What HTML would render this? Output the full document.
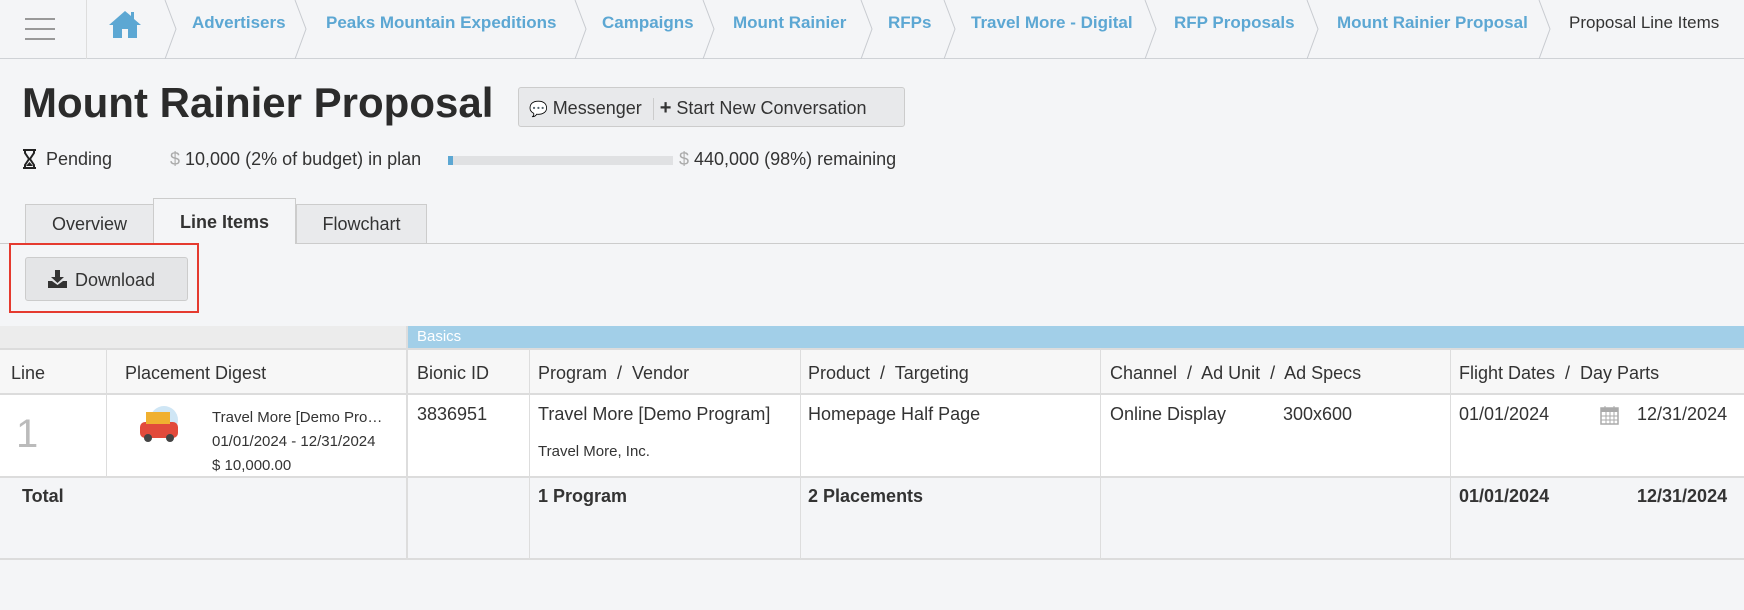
<!DOCTYPE html>
<html><head><meta charset="utf-8"><style>
*{box-sizing:border-box;margin:0;padding:0}
body{width:1744px;height:610px;background:#f4f5f7;font-family:"Liberation Sans",sans-serif;color:#333;position:relative;overflow:hidden}
.a{position:absolute;white-space:nowrap}
.nav{position:absolute;left:0;top:0;width:1744px;height:59px;border-bottom:1px solid #cfd2d6;background:#f4f5f7}
.bc{position:absolute;top:13px;font-size:17px;font-weight:bold;color:#5ca7d3}
.chev{position:absolute;top:0}
.tab{position:absolute;border:1px solid #ccc;border-bottom:none;background:#e9eaec;font-size:18px;text-align:center}
.cell{position:absolute;font-size:18px}
.vl{position:absolute;width:1px;background:#ddd}
.hl{position:absolute;height:2px;background:#dcdcdc}
</style></head><body>
<div class="nav">
 <div class="a" style="left:25px;top:18px;width:30px;height:2px;background:#999"></div>
 <div class="a" style="left:25px;top:28px;width:30px;height:2px;background:#999"></div>
 <div class="a" style="left:25px;top:38px;width:30px;height:2px;background:#999"></div>
 <div class="a" style="left:86px;top:0;width:1px;height:59px;background:#ddd"></div>
 <svg class="a" style="left:108px;top:9px" width="34" height="30" viewBox="0 0 34 30"><path d="M17 2 L1 16 L5 16 L5 29 L14 29 L14 20 L20 20 L20 29 L29 29 L29 16 L33 16 L26 10 L26 3 L23 3 L23 7 Z" fill="#5ca7d3"/></svg>
 <svg class="chev" width="1744" height="59" style="left:0"><g fill="none" stroke="#c8cbd0" stroke-width="1">
 <path d="M165 0 L176 29 L165 59"/><path d="M295 0 L306 29 L295 59"/><path d="M575 0 L586 29 L575 59"/><path d="M703 0 L714 29 L703 59"/><path d="M861 0 L872 29 L861 59"/><path d="M944 0 L955 29 L944 59"/><path d="M1145 0 L1156 29 L1145 59"/><path d="M1307 0 L1318 29 L1307 59"/><path d="M1539 0 L1550 29 L1539 59"/></g></svg>
 <div class="bc" style="left:192px">Advertisers</div>
 <div class="bc" style="left:326px">Peaks Mountain Expeditions</div>
 <div class="bc" style="left:602px">Campaigns</div>
 <div class="bc" style="left:733px">Mount Rainier</div>
 <div class="bc" style="left:888px">RFPs</div>
 <div class="bc" style="left:971px">Travel More - Digital</div>
 <div class="bc" style="left:1174px">RFP Proposals</div>
 <div class="bc" style="left:1337px">Mount Rainier Proposal</div>
 <div class="bc" style="left:1569px;font-weight:normal;color:#333">Proposal Line Items</div>
</div>
<div class="a" style="left:22px;top:79px;font-size:42px;font-weight:bold;color:#2b2b2b">Mount Rainier Proposal</div>
<div class="a" style="left:518px;top:87px;width:387px;height:40px;border:1px solid #ccc;border-radius:3px;background:#e8e9eb;font-size:18px;padding-top:9px;padding-left:10px">
 <span style="font-size:15px">💬</span> Messenger <span style="display:inline-block;width:1px;height:22px;background:#ccc;vertical-align:middle;margin:0 6px"></span><b style="font-size:20px">+</b> Start New Conversation</div>
<svg class="a" style="left:22px;top:149px" width="15" height="20" viewBox="0 0 15 20"><path d="M1 1h13M1 19h13M3 1v3l4 6-4 6v3M12 1v3l-4 6 4 6v3" fill="none" stroke="#222" stroke-width="2"/><path d="M4 17l3.5-4 3.5 4z" fill="#222"/></svg>
<div class="a" style="left:46px;top:149px;font-size:18px">Pending</div>
<div class="a" style="left:170px;top:149px;font-size:18px"><span style="color:#aaa">$</span> 10,000 (2% of budget) in plan</div>
<div class="a" style="left:448px;top:156px;width:225px;height:9px;background:#e0e1e3"><div style="width:5px;height:9px;background:#5ca7d3"></div></div>
<div class="a" style="left:679px;top:149px;font-size:18px"><span style="color:#aaa">$</span> 440,000 (98%) remaining</div>
<div class="a" style="left:0;top:243px;width:1744px;height:1px;background:#ccc"></div>
<div class="tab" style="left:25px;top:204px;width:129px;height:39px;padding-top:9px">Overview</div>
<div class="tab" style="left:153px;top:198px;width:143px;height:46px;background:#f4f5f7;padding-top:13px;font-weight:bold">Line Items</div>
<div class="tab" style="left:296px;top:204px;width:131px;height:39px;padding-top:9px">Flowchart</div>
<div class="a" style="left:9px;top:243px;width:190px;height:70px;border:2px solid #e53a2f"></div>
<div class="a" style="left:25px;top:257px;width:163px;height:44px;border:1px solid #ccc;border-radius:3px;background:#e4e5e7"></div>
<svg class="a" style="left:48px;top:270px" width="19" height="18" viewBox="0 0 19 18"><path d="M7 0h5v7h4l-6.5 6L3 7h4z" fill="#333"/><path d="M0 11h4l5.5 4 5.5-4h4v7H0z" fill="#333"/></svg>
<div class="a" style="left:75px;top:270px;font-size:18px">Download</div>
<!-- table -->
<div class="a" style="left:0;top:326px;width:407px;height:22px;background:#ececec"></div>
<div class="a" style="left:407px;top:326px;width:1337px;height:22px;background:#a2cfe8;color:#fff;font-size:15px;padding:2px 0 0 10px">Basics</div>
<div class="a" style="left:0;top:348px;width:1744px;height:46px;background:#f7f7f7"></div>
<div class="a" style="left:0;top:394px;width:1744px;height:83px;background:#fff"></div>
<div class="hl" style="left:0;top:348px;width:1744px"></div>
<div class="hl" style="left:0;top:393px;width:1744px"></div>
<div class="hl" style="left:0;top:476px;width:1744px"></div>
<div class="hl" style="left:0;top:558px;width:1744px"></div>
<div class="vl" style="left:106px;top:348px;height:130px"></div>
<div class="vl" style="left:406px;top:326px;height:234px;width:2px"></div>
<div class="vl" style="left:529px;top:348px;height:211px"></div>
<div class="vl" style="left:800px;top:348px;height:211px"></div>
<div class="vl" style="left:1100px;top:348px;height:211px"></div>
<div class="vl" style="left:1450px;top:348px;height:211px"></div>
<div class="cell" style="left:11px;top:363px">Line</div>
<div class="cell" style="left:125px;top:363px">Placement Digest</div>
<div class="cell" style="left:417px;top:363px">Bionic ID</div>
<div class="cell" style="left:538px;top:363px">Program &nbsp;/&nbsp; Vendor</div>
<div class="cell" style="left:808px;top:363px">Product &nbsp;/&nbsp; Targeting</div>
<div class="cell" style="left:1110px;top:363px">Channel &nbsp;/&nbsp; Ad Unit &nbsp;/&nbsp; Ad Specs</div>
<div class="cell" style="left:1459px;top:363px">Flight Dates &nbsp;/&nbsp; Day Parts</div>
<div class="cell" style="left:16px;top:412px;font-size:40px;color:#bbb">1</div>
<svg class="a" style="left:134px;top:404px" width="50" height="40"><ellipse cx="30" cy="16" rx="14" ry="14" fill="#cfe6f5"/><rect x="6" y="18" width="38" height="16" rx="5" fill="#e24a3b"/><rect x="12" y="8" width="24" height="12" fill="#f0b030"/><circle cx="14" cy="34" r="4" fill="#444"/><circle cx="36" cy="34" r="4" fill="#444"/></svg>
<div class="cell" style="left:212px;top:406px;font-size:15px;line-height:24px">Travel More [Demo Pro…<br>01/01/2024 - 12/31/2024<br>$ 10,000.00</div>
<div class="cell" style="left:417px;top:404px">3836951</div>
<div class="cell" style="left:538px;top:404px">Travel More [Demo Program]</div>
<div class="cell" style="left:538px;top:443px;font-size:15px">Travel More, Inc.</div>
<div class="cell" style="left:808px;top:404px">Homepage Half Page</div>
<div class="cell" style="left:1110px;top:404px">Online Display</div>
<div class="cell" style="left:1283px;top:404px">300x600</div>
<div class="cell" style="left:1459px;top:404px">01/01/2024</div>
<svg class="a" style="left:1600px;top:405px" width="19" height="20"><rect x="1" y="3" width="17" height="16" fill="none" stroke="#aaa" stroke-width="1.5"/><rect x="1" y="3" width="17" height="4" fill="#aaa"/><path d="M5 1v4M14 1v4M1 11h17M1 15h17M6 7v12M10 7v12M14 7v12" stroke="#aaa"/></svg>
<div class="cell" style="left:1637px;top:404px">12/31/2024</div>
<div class="cell" style="left:22px;top:486px;font-weight:bold">Total</div>
<div class="cell" style="left:538px;top:486px;font-weight:bold">1 Program</div>
<div class="cell" style="left:808px;top:486px;font-weight:bold">2 Placements</div>
<div class="cell" style="left:1459px;top:486px;font-weight:bold">01/01/2024</div>
<div class="cell" style="left:1637px;top:486px;font-weight:bold">12/31/2024</div>
</body></html>
